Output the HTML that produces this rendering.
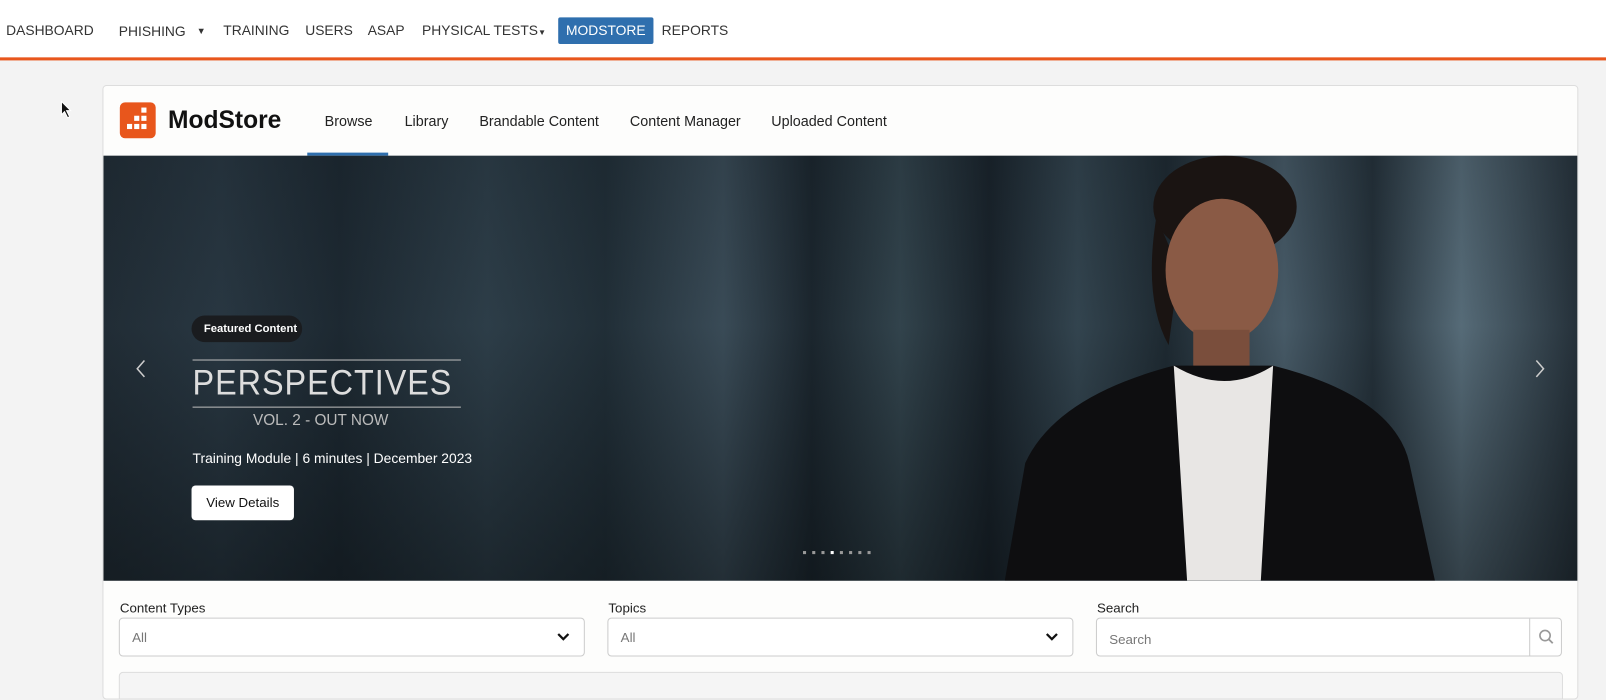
<!DOCTYPE html>
<html><head><meta charset="utf-8"><style>
*{box-sizing:border-box;margin:0;padding:0}
body{width:1606px;height:678px;overflow:hidden;background:#f3f3f3;font-family:"Liberation Sans",sans-serif;position:relative}
#w{position:absolute;left:0;top:0;width:1568px;height:662px;transform:scale(1.02423);transform-origin:0 0}
.top{position:absolute;left:0;top:0;width:1568px;height:59px;background:#fff;border-bottom:3px solid #e8561c}
.nav{position:absolute;top:22px;font-size:13.5px;color:#333}
.active{position:absolute;left:545px;top:17px;width:93px;height:26px;background:#2f6fae;border-radius:2px;color:#fff;font-size:13.5px;text-align:center;line-height:26px}
.card{position:absolute;left:100px;top:83px;width:1441px;height:600px;background:#fdfdfc;border:1px solid #ddd;border-radius:4px;overflow:hidden}
.logo{position:absolute;left:16px;top:16px;width:35px;height:35px;background:#e8561c;border-radius:5px}
.logo i{position:absolute;width:5px;height:5px;background:#fff}
.brand{position:absolute;left:63px;top:20px;font-size:24px;font-weight:bold;color:#111}
.tab{position:absolute;top:26px;font-size:14px;color:#222}
.hero{position:absolute;left:0;top:68px;width:1441px;height:415px;overflow:hidden;
background:linear-gradient(90deg,#222e37 0%,#2a3944 8%,#1e2a33 16%,#2f404b 26%,#223039 34%,#3c4e5a 42%,#1c272f 48%,#34464f 54%,#1a242c 60%,#354752 66%,#1f2b33 72%,#4a5e6b 80%,#26333c 86%,#5a707d 92%,#26323b 100%)}
.hero:after{content:"";position:absolute;inset:0;background:linear-gradient(180deg,rgba(10,15,20,.2),rgba(10,15,20,.05) 40%,rgba(5,8,10,.45))}
.lbl{position:absolute;font-size:13px;color:#222}
.sel{position:absolute;top:519px;height:38px;border:1px solid #ccc;border-radius:4px;background:#fff;font-size:13px;color:#777;padding:11px 12px}
</style></head><body><div id="w">
<div class="top">
<span class="nav" style="left:6px">DASHBOARD</span>
<span class="nav" style="left:116px;top:23px">PHISHING</span>
<span class="nav" style="left:192px;top:22px;font-size:9px;line-height:17px">▼</span>
<span class="nav" style="left:218px">TRAINING</span>
<span class="nav" style="left:298px">USERS</span>
<span class="nav" style="left:359px">ASAP</span>
<span class="nav" style="left:412px">PHYSICAL TESTS<span style="font-size:8px">▼</span></span>
<div class="active">MODSTORE</div>
<span class="nav" style="left:646px">REPORTS</span>
</div>
<svg style="position:absolute;left:59px;top:98px" width="12" height="18"><path d="M1 1 L1 14 L4 11 L7 17 L9 16 L6 10 L10 10Z" fill="#111" stroke="#fff" stroke-width="1"/></svg>
<div class="card">
<div class="logo"><i style="left:21px;top:5px"></i><i style="left:21px;top:13px"></i><i style="left:14px;top:13px"></i><i style="left:21px;top:21px"></i><i style="left:14px;top:21px"></i><i style="left:7px;top:21px"></i></div>
<div class="brand">ModStore</div>
<span class="tab" style="left:216px">Browse</span>
<div style="position:absolute;left:199px;top:65px;width:79px;height:3px;background:#2f6fae"></div>
<span class="tab" style="left:294px">Library</span>
<span class="tab" style="left:367px">Brandable Content</span>
<span class="tab" style="left:514px">Content Manager</span>
<span class="tab" style="left:652px">Uploaded Content</span>
<div class="hero">
<svg style="position:absolute;left:880px;top:0;z-index:1" width="440" height="415">
<ellipse cx="215" cy="50" rx="70" ry="50" fill="#1a1412"/>
<path d="M148 60 Q135 140 160 185 L170 110Z" fill="#1a1412"/>
<ellipse cx="212" cy="112" rx="55" ry="70" fill="#8a5a45"/>
<rect x="184" y="170" width="55" height="50" fill="#7a4e3c"/>
<path d="M0 415 L20 300 Q50 235 165 205 L262 205 Q380 235 395 300 L420 415Z" fill="#0e0e10"/>
<path d="M165 205 L178 415 L250 415 L262 205 Q215 235 165 205Z" fill="#e8e6e4"/>
</svg>
<div style="position:absolute;left:86px;top:156px;width:108px;height:26px;background:#1a1c1f;border-radius:13px;color:#fff;font-size:11px;font-weight:bold;line-height:26px;padding-left:12px;z-index:2">Featured Content</div>
<div style="position:absolute;left:87px;top:199px;width:262px;height:1px;background:#bbb;z-index:2"></div>
<div style="position:absolute;left:87px;top:203px;font-size:34px;color:#ddd;letter-spacing:1px;z-index:2;transform:scaleX(.93);transform-origin:0 0">PERSPECTIVES</div>
<div style="position:absolute;left:87px;top:245px;width:262px;height:1px;background:#bbb;z-index:2"></div>
<div style="position:absolute;left:146px;top:250px;font-size:15px;color:#bbb;z-index:2">VOL. 2 - OUT NOW</div>
<div style="position:absolute;left:87px;top:288px;font-size:13.5px;color:#fff;z-index:2">Training Module | 6 minutes | December 2023</div>
<div style="position:absolute;left:86px;top:322px;width:100px;height:34px;background:#fff;border-radius:4px;font-size:13px;color:#111;line-height:34px;text-align:center;z-index:2">View Details</div>
<svg style="position:absolute;left:31px;top:198px;z-index:2" width="12" height="20"><path d="M9 2 L2 10 L9 18" stroke="#ccc" stroke-width="1.5" fill="none"/></svg>
<svg style="position:absolute;left:1396px;top:198px;z-index:2" width="12" height="20"><path d="M3 2 L10 10 L3 18" stroke="#ccc" stroke-width="1.5" fill="none"/></svg>
<div style="position:absolute;left:683px;top:386px;z-index:2;display:flex;gap:6px"><i style="width:3px;height:3px;background:#999"></i><i style="width:3px;height:3px;background:#999"></i><i style="width:3px;height:3px;background:#999"></i><i style="width:3px;height:3px;background:#fff"></i><i style="width:3px;height:3px;background:#999"></i><i style="width:3px;height:3px;background:#999"></i><i style="width:3px;height:3px;background:#999"></i><i style="width:3px;height:3px;background:#999"></i></div>
</div>
<span class="lbl" style="left:16px;top:502px">Content Types</span>
<span class="lbl" style="left:493px;top:502px">Topics</span>
<span class="lbl" style="left:970px;top:502px">Search</span>
<div class="sel" style="left:15px;width:455px">All<svg style="position:absolute;right:13px;top:13px" width="14" height="10"><path d="M2 2 L7 7 L12 2" stroke="#111" stroke-width="2.2" fill="none"/></svg></div>
<div class="sel" style="left:492px;width:455px">All<svg style="position:absolute;right:13px;top:13px" width="14" height="10"><path d="M2 2 L7 7 L12 2" stroke="#111" stroke-width="2.2" fill="none"/></svg></div>
<div class="sel" style="left:969px;width:455px;padding-top:13px">Search<span style="position:absolute;right:0;top:0;width:31px;height:36px;border-left:1px solid #ccc"><svg style="position:absolute;left:8px;top:10px" width="16" height="16"><circle cx="6.5" cy="6.5" r="5" stroke="#999" stroke-width="1.6" fill="none"/><path d="M10 10 L14 14" stroke="#999" stroke-width="1.8"/></svg></span></div>
<div style="position:absolute;left:15px;top:572px;width:1410px;height:30px;border:1px solid #ddd;border-radius:4px;background:#f5f5f5"></div>
</div>
</div></body></html>
